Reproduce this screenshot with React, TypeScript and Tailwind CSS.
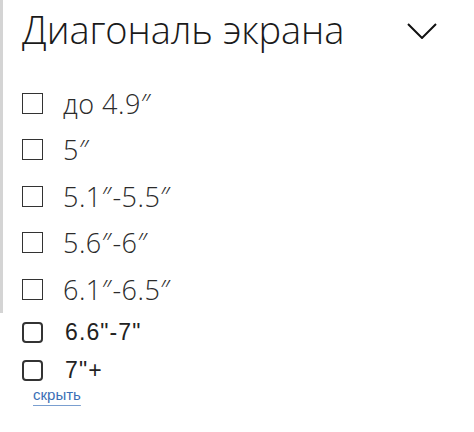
import React from "react";

const topItems = ["до 4.9″", "5″", "5.1″-5.5″", "5.6″-6″", "6.1″-6.5″"];
const bottomItems = ['6.6"-7"', '7"+'];

export default function App() {
  return (
    <div className="w-[474px] h-[432px] bg-white overflow-hidden">
      <div
        className="border-l-[3px] border-[#d4d4d4] h-[313px] pl-[19px] pr-[37px]"
        style={{ fontFamily: '"Open Sans", "Noto Sans", sans-serif' }}
      >
        <div className="h-[58px] flex items-center justify-between">
          <span className="text-[38px] leading-none font-light text-[#1a1a1a] tracking-[-0.1px]">
            Диагональ экрана
          </span>
          <svg width="30" height="16" viewBox="0 0 30 16" className="mt-[4px]">
            <path d="M1 1 L15 15 L29 1" fill="none" stroke="#111" strokeWidth="2" />
          </svg>
        </div>
        <div className="mt-[22px] flex flex-col">
          {topItems.map((t) => (
            <label key={t} className="h-[46.5px] flex items-center">
              <span className="w-[21px] h-[21px] border-[1.5px] border-[#333] shrink-0" />
              <span className="ml-[20px] text-[27px] leading-none font-light text-[#2b2b2b] tracking-[0.5px]">{t}</span>
            </label>
          ))}
        </div>
      </div>
      <div className="pl-[22px]" style={{ fontFamily: '"Liberation Sans", Arial, sans-serif' }}>
        {bottomItems.map((t) => (
          <label key={t} className="h-[38.5px] flex items-center">
            <span className="w-[21px] h-[21px] border-2 border-[#333] rounded-[4px] shrink-0" />
            <span className="ml-[22px] text-[23px] leading-none text-[#222] tracking-[1.1px]">{t}</span>
          </label>
        ))}
        <div className="pl-[11px] -mt-[7px]">
          <a className="text-[15px] leading-none text-[#3b6fb6] underline underline-offset-[5px] decoration-[#7a9fd0]">
            скрыть
          </a>
        </div>
      </div>
    </div>
  );
}
